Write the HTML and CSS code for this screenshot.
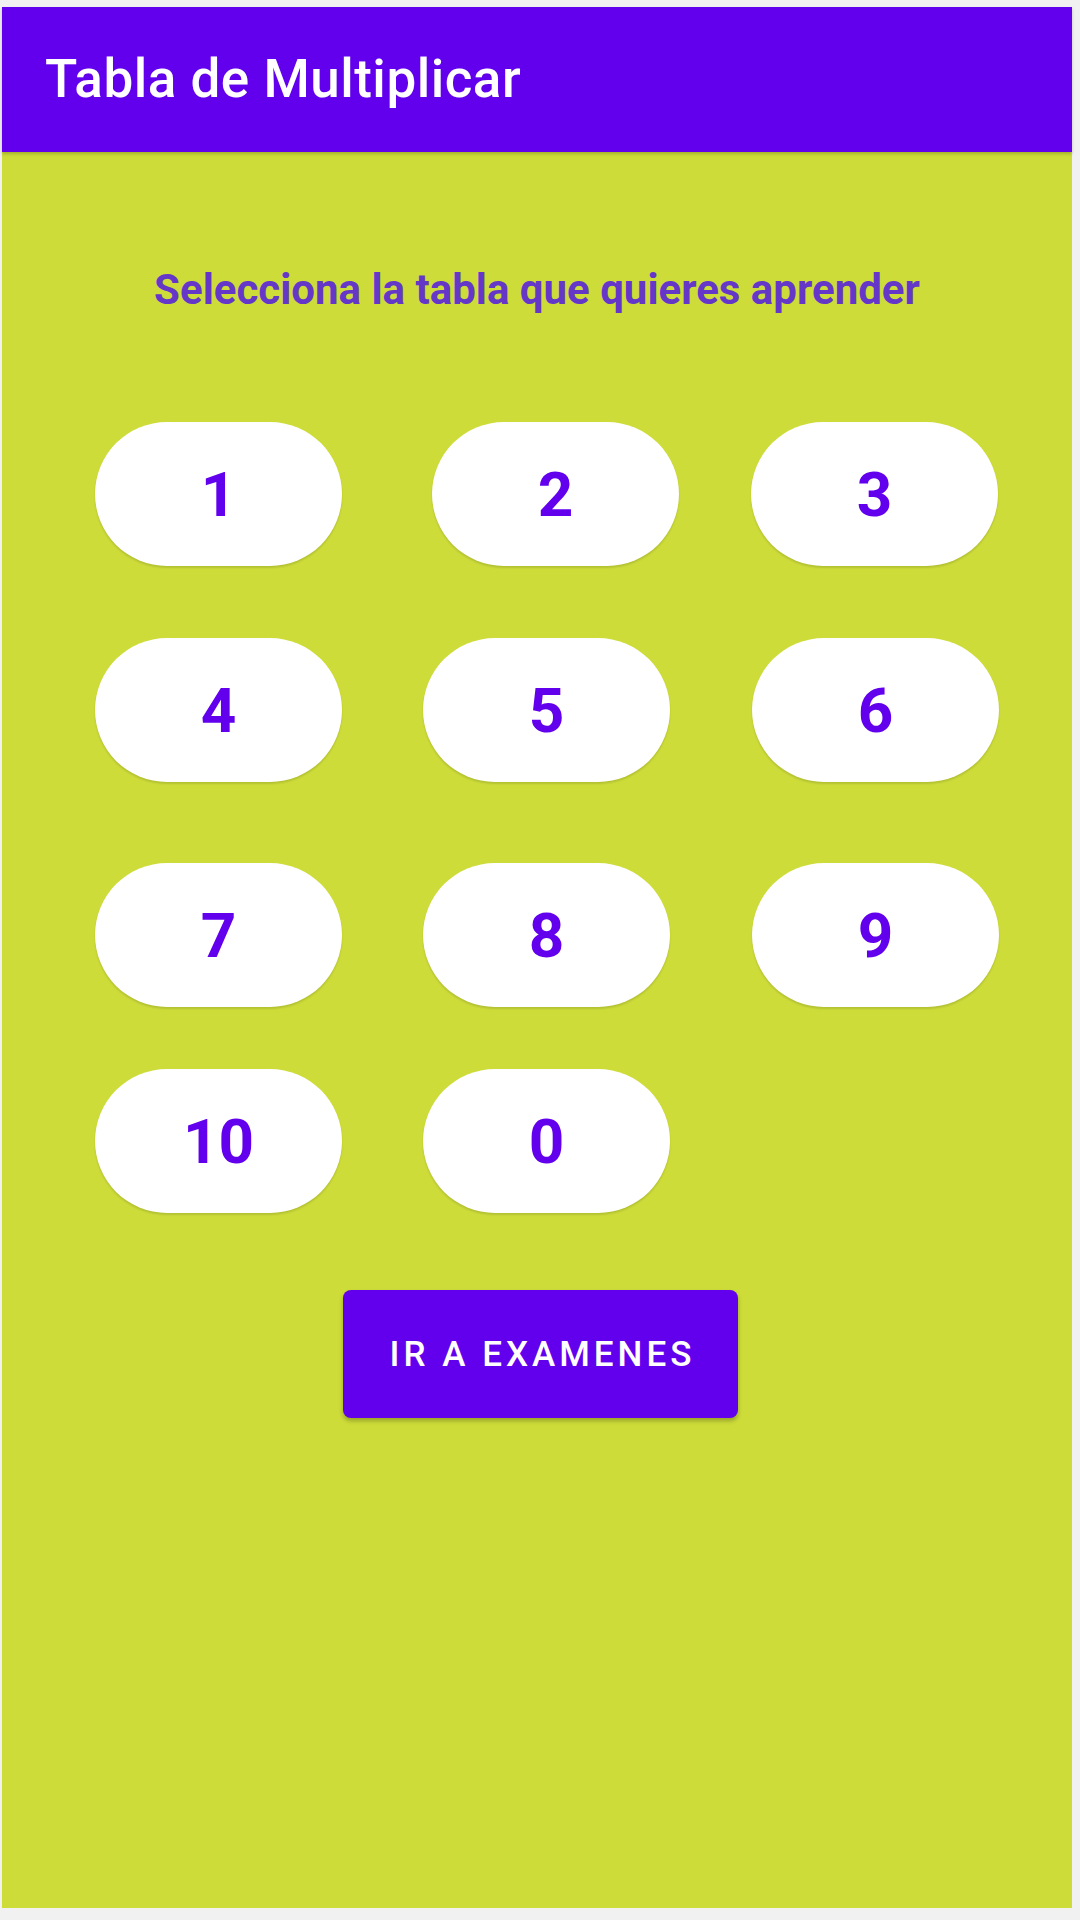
FILE: index.html
```html
<!DOCTYPE html>
<html lang="es">
<head>
<meta charset="utf-8">
<title>Tabla de Multiplicar</title>
<link rel="stylesheet" href="styles.css">
</head>
<body>
<div class="screen">
  <header class="appbar">
    <h1 class="appbar-title">Tabla de Multiplicar</h1>
  </header>
  <main class="content">
    <p class="prompt">Selecciona la tabla que quieres aprender</p>
    <div class="grid">
      <div class="row row-1">
        <button class="num">1</button>
        <button class="num num-shift">2</button>
        <button class="num">3</button>
      </div>
      <div class="row row-2">
        <button class="num">4</button>
        <button class="num">5</button>
        <button class="num">6</button>
      </div>
      <div class="row row-3">
        <button class="num">7</button>
        <button class="num">8</button>
        <button class="num">9</button>
      </div>
      <div class="row row-4">
        <button class="num">10</button>
        <button class="num">0</button>
      </div>
    </div>
    <div class="action">
      <button class="exam-btn">IR A EXAMENES</button>
    </div>
  </main>
</div>
</body>
</html>
```

FILE: styles.css
```css
html, body {
  margin: 0;
  padding: 0;
}
body {
  background: #f1f1f1;
  width: 1080px;
  height: 1920px;
  overflow: hidden;
  font-family: Roboto, "Noto Sans", "Liberation Sans", sans-serif;
}
.screen {
  margin: 7px 8px 0 2px;
  width: 1070px;
  height: 1901px;
  background: #cddc39;
  display: flex;
  flex-direction: column;
}
.appbar {
  height: 145px;
  background: #6200ee;
  display: flex;
  align-items: center;
  padding-left: 43px;
  box-shadow: 0 2px 3px rgba(0, 0, 0, 0.2);
  flex-shrink: 0;
}
.appbar-title {
  margin: 0;
  color: #ffffff;
  font-size: 53px;
  font-weight: 500;
  letter-spacing: 0.5px;
  line-height: 1;
}
.content {
  display: flex;
  flex-direction: column;
}
.prompt {
  margin: 113px 0 0 0;
  text-align: center;
  color: #6537c8;
  font-size: 42px;
  font-weight: 700;
  line-height: 49px;
}
.grid {
  margin-top: 108px;
  padding-left: 93px;
  display: flex;
  flex-direction: column;
}
.row {
  display: flex;
  gap: 81px;
}
.row .num:nth-child(3) {
  margin-left: 1px;
}
.row-2 { margin-top: 72px; }
.row-3 { margin-top: 81px; }
.row-4 { margin-top: 62px; }
.row-1 .num-shift {
  margin-left: 9px;
  margin-right: -10px;
}
.num {
  width: 247px;
  height: 144px;
  border: none;
  border-radius: 72px;
  background: #ffffff;
  color: #6200ee;
  font-family: Roboto, "Noto Sans", "Liberation Sans", sans-serif;
  font-size: 62px;
  font-weight: 700;
  padding: 0;
  display: flex;
  align-items: center;
  justify-content: center;
  box-shadow: 0 2px 2px rgba(0, 0, 0, 0.12);
}
.action {
  margin-top: 77px;
  display: flex;
  padding-left: 341px;
}
.exam-btn {
  width: 395px;
  height: 128px;
  border: none;
  border-radius: 8px;
  background: #6200ee;
  color: #ffffff;
  font-family: Roboto, "Noto Sans", "Liberation Sans", sans-serif;
  font-size: 35px;
  font-weight: 500;
  letter-spacing: 4px;
  padding: 0 0 0 4px;
  box-shadow: 0 3px 4px rgba(0, 0, 0, 0.25);
}
```
